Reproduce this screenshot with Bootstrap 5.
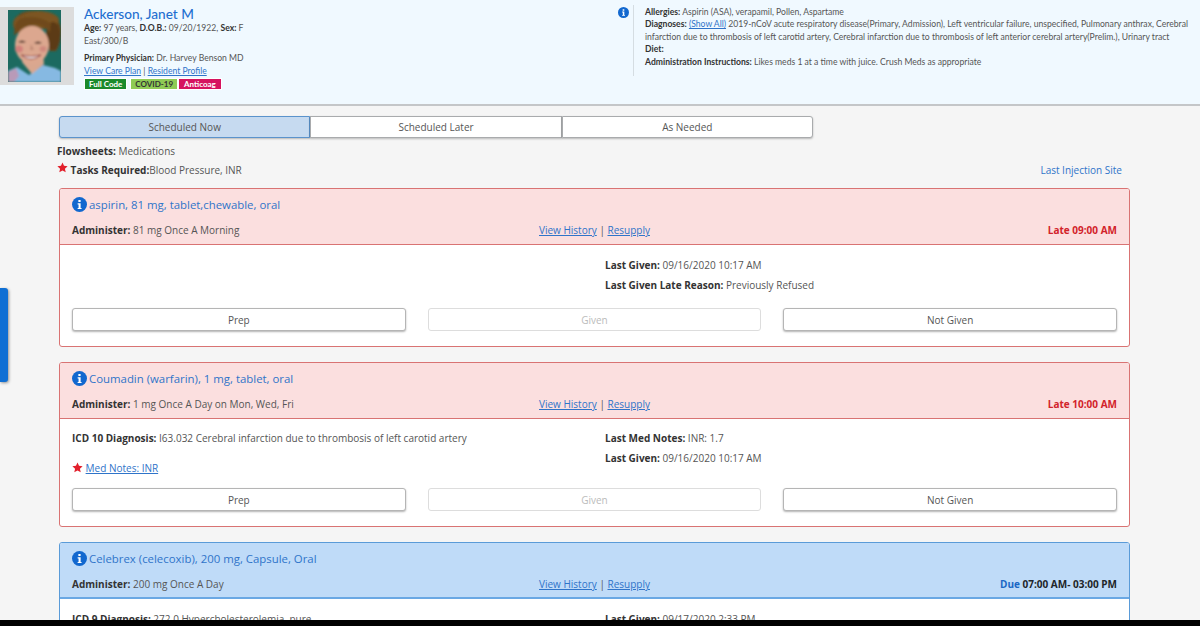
<!DOCTYPE html>
<html lang="en">
<head>
<meta charset="utf-8">
<title>Medication Pass</title>
<link href="https://cdn.jsdelivr.net/npm/bootstrap@5.3.0/dist/css/bootstrap.min.css" rel="stylesheet">
<style>
html,body{height:626px;overflow:hidden}
body{font-family:"Open Sans",sans-serif;font-size:10px;color:#555;background:#f5f5f5;display:flex;flex-direction:column}
b,strong{color:#333;font-weight:700}
a{color:#2f74c9}
.pt-head{height:106px;flex:none;background:#f0f9ff;border-bottom:2px solid #c4c6c8;font-family:Lato,sans-serif;font-size:8.6px;line-height:12.5px;padding-top:7px}
.pt-photo{width:74px;height:78px;background:#dcdcdc;padding:3px 0 0 8px;flex:none}
.pt-photo svg{display:block;width:53px;height:72px}
.pt-id{margin-left:10px}
.pt-name{font-size:13.6px;line-height:14px;color:#1f6fd0;font-weight:500;margin-bottom:1px}
.pt-doc{margin-top:5px}
.pt-tags{display:flex;margin-top:1px}
.pt-tag{font-size:8px;font-weight:700;line-height:10px;padding:0 4px;border:1px solid #fff;height:12px}
.t-code{background:#1b8a2c;color:#fff;margin-right:3px}
.t-covid{background:#8fcb55;color:#333}
.t-anti{background:#d6135f;color:#fff;padding:0 5px}
.pt-info{position:absolute;left:618px;top:7px}
.pt-facts{position:absolute;left:633px;top:5px;width:557px;height:71px;border-left:1px solid #d5dde2;padding:1px 0 0 11px;line-height:12.4px}
.main{flex:1 1 auto;min-height:0;overflow:hidden;padding:10px 70px 0 59px;position:relative}
.tabset{display:flex;width:754px;height:22px}
.tabx{flex:1 1 0;background:#fff;border:1px solid #a9abad;border-radius:0;padding:0;font-size:10px;line-height:20px;color:#555;text-align:center;box-shadow:0 1px 2px rgba(0,0,0,.25)}
.tabx:first-child{background:#c6daf0;border-color:#5b93cc;border-radius:3px 0 0 3px}
.tabx:last-child{border-radius:0 3px 3px 0}
.meta{margin-left:-2px;line-height:15px;margin-top:6px}
.tasks{display:flex;justify-content:space-between;margin-top:3px;height:15px;margin-bottom:11px;line-height:15px}
.tasks a{text-decoration:none;margin-right:8px;padding-top:1px}
.tasks .star{vertical-align:1px}
.medcard{border:1px solid #d97373;border-radius:3px;background:#fff;margin-bottom:15px}
.medhead{background:#fbdfdf;border-bottom:1px solid #d97373;height:56px;padding:5px 12px 0 12px;border-radius:2px 2px 0 0}
.medname{display:flex;align-items:center;gap:2px;font-size:11.4px;line-height:19px;color:#2f74c9;height:20px}
.medname svg{width:15px;height:15px;flex:none}
.medline{display:grid;grid-template-columns:1fr 1fr 1fr;column-gap:22px;margin-top:9px;line-height:15px}
.medline>div:nth-child(2){text-align:center}
.medline>div:nth-child(3){text-align:right;font-weight:700}
.late{color:#d2232a}
.medbody{padding:0 12px 15px}
.notes{line-height:20px;height:63px;padding-top:10px}
.notes-tall{height:69px;padding-top:10px;line-height:19.5px}
.notes .row{--bs-gutter-x:21px}
.mednote{margin-top:10px}
.acts{display:grid;grid-template-columns:1fr 1fr 1fr;column-gap:22px}
.actbtn{height:23px;background:#fff;border:1px solid #b5b5b5;border-radius:3px;box-shadow:0 1px 2px rgba(0,0,0,.3);font-size:10px;color:#555;line-height:20px;padding:0}
.actbtn:disabled{background:#fff;border-color:#ddd;color:#bbb;box-shadow:none;opacity:1}
.medcard.due{border-color:#5a9bd8}
.due .medhead{background:#bfdbf8;border-bottom:2px solid #6aa8e4}
.duelabel{color:#1a67c4}
.star{width:11px;height:11px;vertical-align:-1px}
.sideflag{position:absolute;left:0;top:288px;width:8px;height:94px;background:#0f6fd4;border-radius:0 3px 3px 0;box-shadow:1px 1px 3px rgba(0,0,0,.4)}
.blackbar{height:6px;flex:none;background:#000}
</style>
</head>
<body>
<svg width="0" height="0" class="position-absolute"><defs>
<symbol id="inf" viewBox="0 0 16 16"><circle cx="8" cy="8" r="8" fill="#1268cf"/><path fill="#fff" d="M6.800 3.200h2.400v2.200H6.800zM6 6.600h3.200v5h1v1.300H6v-1.300h1V8H6z"/></symbol>
<symbol id="stx" viewBox="0 0 24 24"><path fill="#e2202c" d="M12 1l3.300 7.300 7.900.9-5.900 5.300 1.700 7.800L12 18.300l-7 4 1.700-7.800L.8 9.200l7.900-.9z"/></symbol>
</defs></svg>

<header class="pt-head position-relative d-flex">
  <div class="pt-photo">
    <svg viewBox="0 0 53 72" preserveAspectRatio="none" role="img" aria-label="Resident photo">
      <defs><filter id="sf"><feGaussianBlur stdDeviation="1"/></filter></defs>
      <rect width="53" height="72" fill="#1c6a60"/>
      <g filter="url(#sf)">
        <path d="M0 72V61l9-4 12 8 14-10 12 3 6 3v11z" fill="#86b9e2"/>
        <path d="M0 62l8-4 3 8-5 6H0z" fill="#b99ab8"/>
        <path d="M14 52l10 12 12-10-1-10H16z" fill="#d9a78f"/>
        <path d="M6 14Q8 0 27 1q24 0 26 19 0 14-5 21l-7 0 1-22-26-2-5 9z" fill="#6b4519"/>
        <ellipse cx="30" cy="10" rx="21" ry="9" fill="#7c5520"/>
        <ellipse cx="13" cy="14" rx="8" ry="9" fill="#7a5320"/>
        <ellipse cx="45" cy="26" rx="7" ry="14" fill="#5c3a14"/>
        <ellipse cx="24" cy="35" rx="17" ry="19" fill="#dca78f"/>
        <path d="M7 25q6-11 19-11 10 0 16 9l1-9Q30 4 12 9 6 14 6 25z" fill="#6f4a1b"/>
        <path d="M10 32q4-3 8 0-4 1.500-8 0zM26 33q4-3 8 0-4 1.500-8 0z" fill="#4e3328"/>
        <path d="M23 34l-1 6h4z" fill="#c08a76"/>
        <path d="M13 45q10 8 20 0-10 3-20 0z" fill="#fff" stroke="#8e3232"/>
        <ellipse cx="11" cy="39" rx="4" ry="3.500" fill="#d2807a"/>
        <ellipse cx="35" cy="39" rx="3.500" ry="3" fill="#d08a7e"/>
      </g>
    </svg>
  </div>
  <div class="pt-id">
    <div class="pt-name">Ackerson, Janet M</div>
    <div><b>Age:</b> 97 years, <b>D.O.B.:</b> 09/20/1922, <b>Sex:</b> F</div>
    <div>East/300/B</div>
    <div class="pt-doc"><b>Primary Physician:</b> Dr. Harvey Benson MD</div>
    <div><a href="#">View Care Plan</a> | <a href="#">Resident Profile</a></div>
    <div class="pt-tags"><span class="pt-tag t-code">Full Code</span><span class="pt-tag t-covid">COVID-19</span><span class="pt-tag t-anti">Anticoag</span></div>
  </div>
  <svg class="pt-info" width="11" height="11"><use href="#inf"/></svg>
  <div class="pt-facts">
    <div><b>Allergies:</b> Aspirin (ASA), verapamil, Pollen, Aspartame</div>
    <div><b>Diagnoses:</b> <a href="#">(Show All)</a> 2019-nCoV acute respiratory disease(Primary, Admission), Left ventricular failure, unspecified, Pulmonary anthrax, Cerebral infarction due to thrombosis of left carotid artery, Cerebral infarction due to thrombosis of left anterior cerebral artery(Prelim.), Urinary tract</div>
    <div><b>Diet:</b></div>
    <div><b>Administration Instructions:</b> Likes meds 1 at a time with juice. Crush Meds as appropriate</div>
  </div>
</header>

<div class="sideflag"></div>

<main class="main">
  <div class="tabset">
    <button type="button" class="btn tabx">Scheduled Now</button>
    <button type="button" class="btn tabx">Scheduled Later</button>
    <button type="button" class="btn tabx">As Needed</button>
  </div>
  <div class="meta"><b>Flowsheets:</b> Medications</div>
  <div class="tasks meta">
    <span><svg class="star"><use href="#stx"/></svg> <b>Tasks Required:</b>Blood Pressure, INR</span>
    <a href="#">Last Injection Site</a>
  </div>

  <section class="medcard">
    <div class="medhead">
      <div class="medname"><svg><use href="#inf"/></svg>aspirin, 81 mg, tablet,chewable, oral</div>
      <div class="medline"><div><b>Administer:</b> 81 mg Once A Morning</div><div><a href="#">View History</a> | <a href="#">Resupply</a></div><div class="late">Late 09:00 AM</div></div>
    </div>
    <div class="medbody">
      <div class="notes"><div class="row"><div class="col-6"></div><div class="col-6"><div><b>Last Given:</b> 09/16/2020 10:17 AM</div><div><b>Last Given Late Reason:</b> Previously Refused</div></div></div></div>
      <div class="acts"><button type="button" class="btn actbtn">Prep</button><button type="button" class="btn actbtn" disabled>Given</button><button type="button" class="btn actbtn">Not Given</button></div>
    </div>
  </section>

  <section class="medcard">
    <div class="medhead">
      <div class="medname"><svg><use href="#inf"/></svg>Coumadin (warfarin), 1 mg, tablet, oral</div>
      <div class="medline"><div><b>Administer:</b> 1 mg Once A Day on Mon, Wed, Fri</div><div><a href="#">View History</a> | <a href="#">Resupply</a></div><div class="late">Late 10:00 AM</div></div>
    </div>
    <div class="medbody">
      <div class="notes notes-tall"><div class="row"><div class="col-6"><div><b>ICD 10 Diagnosis:</b> I63.032 Cerebral infarction due to thrombosis of left carotid artery</div><div class="mednote"><svg class="star"><use href="#stx"/></svg> <a href="#">Med Notes: INR</a></div></div><div class="col-6"><div><b>Last Med Notes:</b> INR: 1.7</div><div><b>Last Given:</b> 09/16/2020 10:17 AM</div></div></div></div>
      <div class="acts"><button type="button" class="btn actbtn">Prep</button><button type="button" class="btn actbtn" disabled>Given</button><button type="button" class="btn actbtn">Not Given</button></div>
    </div>
  </section>

  <section class="medcard due">
    <div class="medhead">
      <div class="medname"><svg><use href="#inf"/></svg>Celebrex (celecoxib), 200 mg, Capsule, Oral</div>
      <div class="medline"><div><b>Administer:</b> 200 mg Once A Day</div><div><a href="#">View History</a> | <a href="#">Resupply</a></div><div><span class="duelabel">Due</span> <span class="text-dark">07:00 AM- 03:00 PM</span></div></div>
    </div>
    <div class="medbody">
      <div class="notes"><div class="row"><div class="col-6"><b>ICD 9 Diagnosis:</b> 272.0 Hypercholesterolemia, pure</div><div class="col-6"><b>Last Given:</b> 09/17/2020 2:33 PM</div></div></div>
    </div>
  </section>
</main>
<div class="blackbar"></div>
<script src="https://cdn.jsdelivr.net/npm/bootstrap@5.3.0/dist/js/bootstrap.bundle.min.js"></script>
</body>
</html>
